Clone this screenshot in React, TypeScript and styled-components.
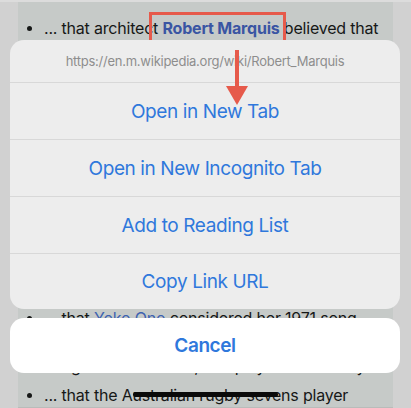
import styled, { createGlobalStyle } from "styled-components";

const GlobalStyle = createGlobalStyle`
  html, body {
    margin: 0;
    padding: 0;
    background: #d2d2d2;
  }
  body {
    font-family: Inter, "Liberation Sans", sans-serif;
    -webkit-font-smoothing: antialiased;
  }
`;

const Screen = styled.div`
  position: relative;
  width: 411px;
  height: 408px;
  overflow: hidden;
  display: flex;
  background: #d3d3d3;
  border-top: 2px solid #dcdcdc;
  box-sizing: border-box;
`;

const Gutter = styled.div<{ $w: number }>`
  width: ${(p) => p.$w}px;
  flex: none;
  background: #d1d1d1;
`;

const Article = styled.div`
  flex: 1;
  background: #c6cac8;
  border-bottom: 1px solid #b9bcba;
  padding-top: 14px;
  box-sizing: border-box;
`;

const List = styled.ul`
  margin: 0;
  padding: 0 0 0 26px;
  list-style: disc;
  font-size: 16px;
  letter-spacing: -0.2px;
  line-height: 24px;
  color: #161817;
`;

const Item = styled.li<{ $top?: number }>`
  margin-top: ${(p) => p.$top ?? 0}px;
  &::marker {
    font-size: 15px;
  }
`;

const Clamp = styled.div<{ $lines: number }>`
  display: -webkit-box;
  -webkit-box-orient: vertical;
  -webkit-line-clamp: ${(p) => p.$lines};
  overflow: hidden;
`;

const Link = styled.span<{ $bold?: boolean }>`
  color: ${(p) => (p.$bold ? "#3a55a3" : "#3d62b0")};
  font-weight: ${(p) => (p.$bold ? 700 : 400)};
`;

const Backdrop = styled.div`
  position: absolute;
  left: 10px;
  right: 11px;
  top: 38px;
  display: flex;
  flex-direction: column;
  gap: 9px;
`;

const Sheet = styled.div`
  background: #ededed;
  border-radius: 14px;
  overflow: hidden;
  display: flex;
  flex-direction: column;
`;

const SheetHeader = styled.div`
  height: 42px;
  display: flex;
  align-items: center;
  justify-content: center;
  font-size: 13px;
  letter-spacing: -0.25px;
  color: #8d8d8d;
  border-bottom: 1px solid #d8d8d8;
`;

const Action = styled.div<{ $last?: boolean }>`
  height: ${(p) => (p.$last ? 55 : 56)}px;
  display: flex;
  align-items: center;
  justify-content: center;
  font-size: 19px;
  letter-spacing: -0.4px;
  color: #2f78dc;
  border-bottom: ${(p) => (p.$last ? "none" : "1px solid #d8d8d8")};
`;

const CancelButton = styled.div`
  height: 55px;
  background: #ffffff;
  border-radius: 14px;
  display: flex;
  align-items: center;
  justify-content: center;
  font-size: 19px;
  letter-spacing: -0.4px;
  font-weight: 600;
  color: #2f78dc;
`;

const HomeIndicator = styled.div`
  position: absolute;
  left: 133px;
  top: 390px;
  width: 145px;
  height: 5px;
  border-radius: 3px;
  background: #0a0a0a;
`;

const Highlight = styled.div`
  position: absolute;
  left: 149px;
  top: 10px;
  width: 137px;
  height: 37px;
  border: 3px solid #e65a4b;
  box-sizing: border-box;
`;

const Arrow = styled.svg`
  position: absolute;
  left: 224px;
  top: 46px;
`;

export default function App() {
  return (
    <>
      <GlobalStyle />
      <Screen>
        <Gutter $w={18} />
        <Article>
          <List>
            <Item>
              <Clamp $lines={12}>
                ... that architect <Link $bold>Robert Marquis</Link> believed that
                buildings should be designed to fit into the natural landscape,
                an approach he used for homes, schools, churches and public
                spaces across the San Francisco Bay Area, working with
                redwood, glass and concrete, and that he once described the
                city as a place that rewards careful observation and patience,
                open courtyards, quiet gardens, light from the north, and the
                long shadows of late afternoon falling across the hills above
                the bay, where the fog rolls in each evening over the ridge
                and settles in the valleys below the old orchards and farms
                that once covered most of the peninsula before the suburbs
                spread south along the railway line toward San Jose and beyond?
              </Clamp>
            </Item>
            <Item $top={2}>
              <Clamp $lines={3}>
                ... that <Link>Yoko Ono</Link> considered her 1971 song
                "Sisters,&nbsp;O&nbsp;Sisters" (pictured) the greatest song she
                ever wrote, and played it at nearly every concert for years?
              </Clamp>
            </Item>
            <Item $top={5}>... that the Australian rugby sevens player</Item>
          </List>
        </Article>
        <Gutter $w={18} />

        <Highlight />

        <Backdrop>
          <Sheet>
            <SheetHeader>https://en.m.wikipedia.org/wiki/Robert_Marquis</SheetHeader>
            <Action>Open in New Tab</Action>
            <Action>Open in New Incognito Tab</Action>
            <Action>Add to Reading List</Action>
            <Action $last>Copy Link URL</Action>
          </Sheet>
          <CancelButton>Cancel</CancelButton>
        </Backdrop>

        <Arrow width="26" height="58" viewBox="0 0 26 58">
          <rect x="11" y="2" width="4" height="40" fill="#e65a4b" />
          <polygon points="2,38 24,38 13,57" fill="#e65a4b" />
        </Arrow>

        <HomeIndicator />
      </Screen>
    </>
  );
}
